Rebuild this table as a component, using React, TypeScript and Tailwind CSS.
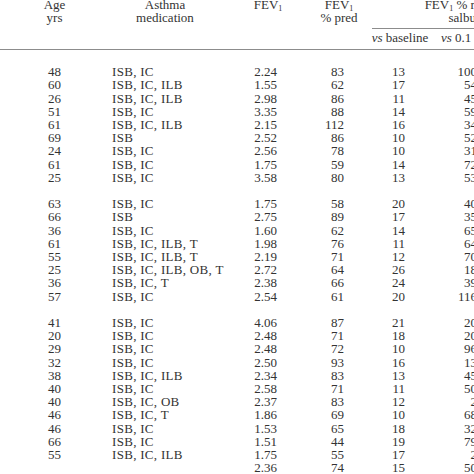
import React from 'react';

type Row = [string, string, string, string, string, string];

const groups: Row[][] = [
    [
        ['48', 'ISB, IC', '2.24', '83', '13', '100'],
        ['60', 'ISB, IC, ILB', '1.55', '62', '17', '54'],
        ['26', 'ISB, IC, ILB', '2.98', '86', '11', '45'],
        ['51', 'ISB, IC', '3.35', '88', '14', '59'],
        ['61', 'ISB, IC, ILB', '2.15', '112', '16', '34'],
        ['69', 'ISB', '2.52', '86', '10', '52'],
        ['24', 'ISB, IC', '2.56', '78', '10', '31'],
        ['61', 'ISB, IC', '1.75', '59', '14', '72'],
        ['25', 'ISB, IC', '3.58', '80', '13', '53'],
    ],
    [
        ['63', 'ISB, IC', '1.75', '58', '20', '40'],
        ['66', 'ISB', '2.75', '89', '17', '35'],
        ['36', 'ISB, IC', '1.60', '62', '14', '65'],
        ['61', 'ISB, IC, ILB, T', '1.98', '76', '11', '64'],
        ['55', 'ISB, IC, ILB, T', '2.19', '71', '12', '70'],
        ['25', 'ISB, IC, ILB, OB, T', '2.72', '64', '26', '18'],
        ['36', 'ISB, IC, T', '2.38', '66', '24', '39'],
        ['57', 'ISB, IC', '2.54', '61', '20', '116'],
    ],
    [
        ['41', 'ISB, IC', '4.06', '87', '21', '20'],
        ['20', 'ISB, IC', '2.48', '71', '18', '20'],
        ['29', 'ISB, IC', '2.48', '72', '10', '96'],
        ['32', 'ISB, IC', '2.50', '93', '16', '13'],
        ['38', 'ISB, IC, ILB', '2.34', '83', '13', '45'],
        ['40', 'ISB, IC', '2.58', '71', '11', '50'],
        ['40', 'ISB, IC, OB', '2.37', '83', '12', '2'],
        ['46', 'ISB, IC, T', '1.86', '69', '10', '68'],
        ['46', 'ISB, IC', '1.53', '65', '18', '32'],
        ['66', 'ISB, IC', '1.51', '44', '19', '79'],
        ['55', 'ISB, IC, ILB', '1.75', '55', '17', '2'],
        ['', '', '2.36', '74', '15', '50'],
    ],
];

const Fev = () => (
    <>
        FEV<sub className="text-[8px]">1</sub>
    </>
);

const App: React.FC = () => {
    return (
        <div
            className="w-[474px] h-[474px] overflow-hidden bg-white text-[#333] text-[13px] leading-[13.2px]"
            style={{ fontFamily: '"Liberation Serif", "Times New Roman", serif' }}
        >
            {/* header */}
            <div className="-mt-[2px] flex items-start w-[600px] border-b border-[#8c8c8c] pb-[5px]">
                <div className="w-[109px] shrink-0 text-center">
                    <div>Age</div>
                    <div>yrs</div>
                </div>
                <div className="w-[112px] shrink-0 text-center">
                    <div>Asthma</div>
                    <div>medication</div>
                </div>
                <div className="w-[94px] shrink-0 text-center">
                    <div><Fev /></div>
                </div>
                <div className="w-[48px] shrink-0 text-center">
                    <div><Fev /></div>
                    <div>% pred</div>
                </div>
                <div className="w-[210px] shrink-0 ml-[9px]">
                    <div className="text-center">
                        <div><Fev /> % response to</div>
                        <div>salbutamol</div>
                    </div>
                    <div className="mt-[3.5px] border-t border-[#8c8c8c]" />
                    <div className="mt-[2px] flex whitespace-nowrap">
                        <div className="w-[60px] -ml-[2px] text-center"><i>vs</i> baseline</div>
                        <div className="ml-[11px]"><i>vs</i> 0.1 mg</div>
                    </div>
                </div>
            </div>

            {/* body */}
            <div className="mt-[15px] flex flex-col gap-[13.2px] w-[480px]">
                {groups.map((g, gi) => (
                    <div key={gi}>
                        {g.map((r, ri) => (
                            <div key={ri} className="flex whitespace-nowrap">
                                <div className="w-[109px] shrink-0 text-center">{r[0]}</div>
                                <div className="w-[131px] shrink-0 pl-[3px] tracking-[0.3px]">{r[1]}</div>
                                <div className="w-[37px] shrink-0 text-right">{r[2]}</div>
                                <div className="w-[67px] shrink-0 text-right">{r[3]}</div>
                                <div className="w-[61px] shrink-0 text-right">{r[4]}</div>
                                <div className="w-[72px] shrink-0 text-right">{r[5]}</div>
                            </div>
                        ))}
                    </div>
                ))}
            </div>
        </div>
    );
};

export default App;
